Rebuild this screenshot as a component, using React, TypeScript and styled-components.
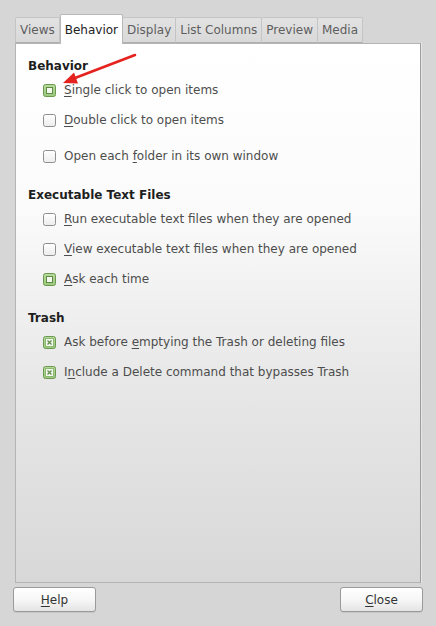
import React from "react";
import styled, { createGlobalStyle } from "styled-components";

const Global = createGlobalStyle`
  html, body { margin: 0; padding: 0; }
  body {
    background: #d6d6d6;
    font-family: "DejaVu Sans", "Liberation Sans", sans-serif;
    font-size: 12px;
    width: 436px;
    height: 626px;
    overflow: hidden;
  }
`;

const Window = styled.div`
  position: relative;
  width: 436px;
  height: 626px;
  display: flex;
  flex-direction: column;
  padding: 14px 15px 0 15px;
  box-sizing: border-box;
`;

const TabBar = styled.div`
  display: flex;
  align-items: flex-end;
  height: 29px;
`;

const Tab = styled.div<{ $active?: boolean }>`
  box-sizing: border-box;
  height: ${(p) => (p.$active ? "30px" : "26px")};
  margin-bottom: ${(p) => (p.$active ? "-1px" : "0")};
  padding: 0 ${(p) => (p.$active ? "4px" : "4px")};
  display: flex;
  align-items: center;
  background: ${(p) => (p.$active ? "#ffffff" : "linear-gradient(#e2e2e2, #d9d9d9)")};
  color: ${(p) => (p.$active ? "#222" : "#5e5e5e")};
  border: 1px solid ${(p) => (p.$active ? "#b8b8b8" : "#c4c4c4")};
  border-bottom: ${(p) => (p.$active ? "none" : "1px solid #b0b0b0")};
  border-left-width: ${(p) => (p.$active ? "1px" : "0")};
  border-radius: 2px 2px 0 0;
  font-size: 12px;
  z-index: ${(p) => (p.$active ? 2 : 1)};
  &:first-child { border-left-width: 1px; }
`;

const Panel = styled.div`
  position: relative;
  box-sizing: border-box;
  width: 406px;
  height: 540px;
  border: 1px solid #b4b4b4;
  border-right-color: #9c9c9c;
  background: linear-gradient(#ffffff 0%, #fbfbfb 30%, #e8e8e8 62%, #d8d8d8 100%);
  padding: 14px 0 0 12px;
  display: flex;
  flex-direction: column;
  box-shadow: 1px 0 0 #e6e6e6;
`;

const Section = styled.div`
  display: flex;
  flex-direction: column;
  margin-bottom: 16px;
`;

const Header = styled.div`
  font-weight: bold;
  color: #1e1e1e;
  font-size: 12px;
  line-height: 16px;
  height: 16px;
  margin-bottom: 1px;
`;

const Row = styled.div<{ $extra?: number }>`
  display: flex;
  align-items: center;
  height: 30px;
  margin-top: ${(p) => p.$extra ?? 0}px;
  padding-left: 15px;
  gap: 8px;
  color: #4d4d4d;
  font-size: 12px;
`;

const U = styled.span`
  text-decoration: underline;
  text-underline-offset: 2px;
`;

const Box = styled.span`
  display: inline-flex;
  width: 13px;
  height: 13px;
  flex: none;
`;

type Kind = "off" | "radio" | "check";

const CheckBox: React.FC<{ kind: Kind }> = ({ kind }) => (
  <Box>
    <svg width="13" height="13" viewBox="0 0 13 13">
      <defs>
        <linearGradient id="cbw" x1="0" y1="0" x2="0" y2="1">
          <stop offset="0" stopColor="#ffffff" />
          <stop offset="1" stopColor="#ececec" />
        </linearGradient>
        <linearGradient id="cbg" x1="0" y1="0" x2="0" y2="1">
          <stop offset="0" stopColor="#b7da9c" />
          <stop offset="1" stopColor="#9cc97d" />
        </linearGradient>
      </defs>
      {kind === "off" ? (
        <rect x="0.5" y="0.5" width="12" height="12" rx="2" fill="url(#cbw)" stroke="#8e8e8e" />
      ) : (
        <rect x="0.5" y="0.5" width="12" height="12" rx="2" fill="url(#cbg)" stroke="#6a984f" />
      )}
      {kind === "radio" && (
        <rect x="3.5" y="3.5" width="6" height="6" fill="#f4f9f0" stroke="#5f8a47" />
      )}
      {kind === "check" && (
        <>
          <rect x="2.5" y="2.5" width="8" height="8" fill="#f4f9f0" stroke="#8cb872" />
          <path d="M4.5 4.5 L8.5 8.5 M8.5 4.5 L4.5 8.5" stroke="#5f8a47" strokeWidth="1.3" />
        </>
      )}
    </svg>
  </Box>
);

const Arrow = styled.svg`
  position: absolute;
  left: 0;
  top: 0;
  pointer-events: none;
`;

const Footer = styled.div`
  display: flex;
  justify-content: space-between;
  padding: 4px 13px 0 13px;
  margin: 0 -15px;
`;

const Button = styled.div`
  box-sizing: border-box;
  width: 83px;
  height: 25px;
  border: 1px solid #9a9a9a;
  border-radius: 3px;
  background: linear-gradient(#ffffff 0%, #f7f7f7 50%, #e4e4e4 100%);
  box-shadow: 0 1px 0 rgba(0, 0, 0, 0.08);
  display: flex;
  align-items: center;
  justify-content: center;
  color: #333;
  font-size: 12px;
`;

export default function App() {
  return (
    <>
      <Global />
      <Window>
        <TabBar>
          <Tab>Views</Tab>
          <Tab $active>Behavior</Tab>
          <Tab>Display</Tab>
          <Tab>List Columns</Tab>
          <Tab>Preview</Tab>
          <Tab>Media</Tab>
        </TabBar>
        <Panel>
          <Section>
            <Header>Behavior</Header>
            <Row>
              <CheckBox kind="radio" />
              <span><U>S</U>ingle click to open items</span>
            </Row>
            <Row>
              <CheckBox kind="off" />
              <span><U>D</U>ouble click to open items</span>
            </Row>
            <Row $extra={6}>
              <CheckBox kind="off" />
              <span>Open each <U>f</U>older in its own window</span>
            </Row>
          </Section>
          <Section>
            <Header>Executable Text Files</Header>
            <Row>
              <CheckBox kind="off" />
              <span><U>R</U>un executable text files when they are opened</span>
            </Row>
            <Row>
              <CheckBox kind="off" />
              <span><U>V</U>iew executable text files when they are opened</span>
            </Row>
            <Row>
              <CheckBox kind="radio" />
              <span><U>A</U>sk each time</span>
            </Row>
          </Section>
          <Section>
            <Header>Trash</Header>
            <Row>
              <CheckBox kind="check" />
              <span>Ask before <U>e</U>mptying the Trash or deleting files</span>
            </Row>
            <Row>
              <CheckBox kind="check" />
              <span>I<U>n</U>clude a Delete command that bypasses Trash</span>
            </Row>
          </Section>
          <Arrow width="140" height="60" viewBox="0 0 140 60">
            <path d="M119 11 L59 34" stroke="#e5231e" strokeWidth="2.6" strokeLinecap="round" fill="none" />
            <path d="M47 39 L62 39.5 L58 28.5 Z" fill="#e5231e" />
          </Arrow>
        </Panel>
        <Footer>
          <Button><span><U>H</U>elp</span></Button>
          <Button><span><U>C</U>lose</span></Button>
        </Footer>
      </Window>
    </>
  );
}
